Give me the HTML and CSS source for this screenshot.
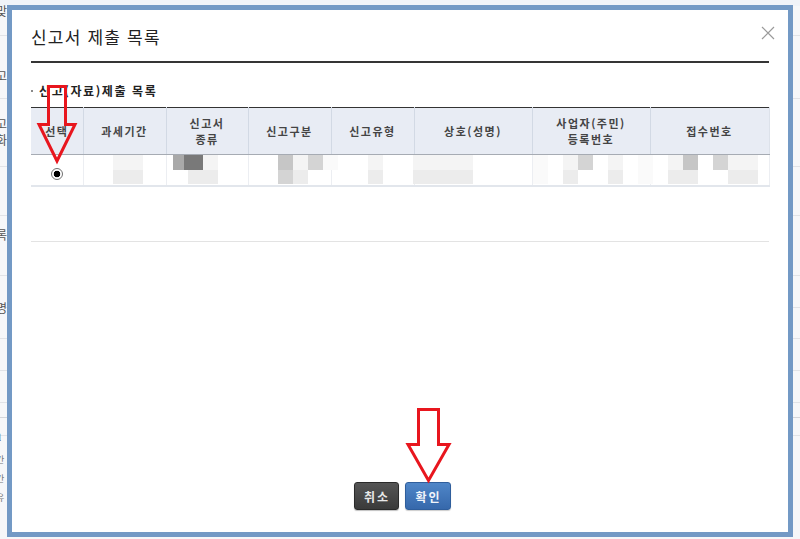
FILE: index.html
```html
<!DOCTYPE html>
<html lang="ko">
<head>
<meta charset="utf-8">
<title>신고서 제출 목록</title>
<link rel="stylesheet" href="styles.css">
</head>
<body>
<div class="gutter">
  <div class="g g-a">맞</div>
  <div class="g g-b">고</div>
  <div class="g g-c">고<br>화</div>
  <div class="g g-d">록</div>
  <div class="g g-e">명</div>
  <div class="g g-f">ll</div>
  <div class="g g-g">간<br>간<br>유</div>
</div>
<div class="modal">
  <div class="modal-head">
    <h1 class="modal-title">신고서 제출 목록</h1>
    <button class="close" type="button" aria-label="닫기">
      <svg width="14" height="14" viewBox="0 0 14 14"><path d="M1 1 L13 13 M13 1 L1 13" stroke="#9a9a9a" stroke-width="1.2" fill="none"/></svg>
    </button>
  </div>
  <div class="rule"></div>
  <h2 class="sec-title"><span class="bullet"></span>신고(자료)제출 목록</h2>
  <div class="list-box">
    <table class="grid">
      <colgroup>
        <col class="w52"><col class="w83"><col class="w82"><col class="w83"><col class="w83"><col class="w118"><col class="w118"><col class="w119">
      </colgroup>
      <thead>
        <tr>
          <th>선택</th>
          <th>과세기간</th>
          <th>신고서<br>종류</th>
          <th>신고구분</th>
          <th>신고유형</th>
          <th>상호(성명)</th>
          <th>사업자(주민)<br>등록번호</th>
          <th>접수번호</th>
        </tr>
      </thead>
      <tbody>
        <tr>
          <td><span class="radio"></span></td>
          <td></td><td></td><td></td><td></td><td></td><td></td><td></td>
        </tr>
      </tbody>
    </table>
    <div class="mosaic" aria-hidden="true">
      <i class="b"></i><i class="b"></i><i></i><i></i><i class="f"></i><i class="g"></i><i class="b"></i><i></i><i></i><i></i><i></i><i class="e"></i><i class="b"></i><i class="d"></i><i class="a"></i><i></i><i></i><i class="b"></i><i></i><i></i><i class="b"></i><i class="b"></i><i class="b"></i><i class="b"></i><i></i><i></i><i></i><i></i><i class="a"></i><i></i><i class="b"></i><i class="d"></i><i></i><i class="b"></i><i></i><i class="a"></i><i></i><i class="b"></i><i class="e"></i><i></i><i class="d"></i><i class="b"></i><i class="b"></i><i></i>
      <i class="c"></i><i class="c"></i><i></i><i></i><i></i><i class="c"></i><i class="c"></i><i></i><i></i><i></i><i></i><i class="d"></i><i class="c"></i><i></i><i></i><i></i><i></i><i class="c"></i><i></i><i></i><i class="c"></i><i class="c"></i><i class="c"></i><i class="c"></i><i></i><i></i><i></i><i></i><i class="a"></i><i></i><i class="c"></i><i></i><i></i><i class="c"></i><i></i><i class="a"></i><i></i><i class="c"></i><i class="c"></i><i></i><i></i><i class="c"></i><i class="c"></i><i></i>
    </div>
  </div>
  <div class="actions">
    <button class="btn btn-dark" type="button">취소</button>
    <button class="btn btn-blue" type="button">확인</button>
  </div>
</div>
<svg class="annot" width="800" height="539" viewBox="0 0 800 539" aria-hidden="true">
  <polygon points="48.5,86.5 65.5,86.5 65.5,124.5 75,124.5 57,161 39,124.5 48.5,124.5" fill="none" stroke="#e8161e" stroke-width="3" stroke-linejoin="miter"/>
  <polygon points="418.5,409.5 438.5,409.5 438.5,444.5 449,444.5 428.5,480.5 408,444.5 418.5,444.5" fill="none" stroke="#e8161e" stroke-width="3" stroke-linejoin="miter"/>
</svg>
</body>
</html>
```
FILE: styles.css
```css
html, body {
  margin: 0;
  padding: 0;
}
body {
  width: 800px;
  height: 539px;
  overflow: hidden;
  display: flex;
  align-items: flex-start;
  position: relative;
  font-family: "Noto Sans CJK KR", "Noto Sans", sans-serif;
  color: #333;
  background-color: #f6f7f9;
  background-image:
    linear-gradient(#f0f3f8, #f0f3f8),
    linear-gradient(#e1e3e7, #e1e3e7),
    linear-gradient(#e1e3e7, #e1e3e7),
    linear-gradient(#e1e3e7, #e1e3e7),
    linear-gradient(#e1e3e7, #e1e3e7),
    linear-gradient(#e1e3e7, #e1e3e7),
    linear-gradient(#e1e3e7, #e1e3e7),
    linear-gradient(#e1e3e7, #e1e3e7),
    linear-gradient(#e1e3e7, #e1e3e7),
    linear-gradient(#e1e3e7, #e1e3e7),
    linear-gradient(#d4d6da, #d4d6da),
    linear-gradient(#e1e3e7, #e1e3e7);
  background-size: 100% 6px, 100% 1px, 100% 1px, 100% 1px, 100% 1px, 100% 1px, 100% 1px, 100% 1px, 100% 1px, 100% 1px, 100% 1px, 100% 1px;
  background-position: 0 0, 0 35px, 0 98px, 0 166px, 0 215px, 0 275px, 0 307px, 0 338px, 0 370px, 0 402px, 0 417px, 0 435px;
  background-repeat: no-repeat;
}

/* underlying page peeking out on the left */
.gutter {
  width: 7px;
  flex: none;
  height: 539px;
  overflow: hidden;
  font-size: 12px;
  line-height: 16px;
  color: #555;
}
.g {
  margin-left: -4px;
  width: 20px;
}
.g-a { margin-top: 3px; height: 16px; }
.g-b { margin-top: 49px; height: 16px; }
.g-c { margin-top: 32px; height: 32px; }
.g-d { margin-top: 79px; height: 16px; }
.g-e { margin-top: 57px; height: 16px; }
.g-f { margin-top: 114px; height: 16px; font-size: 9px; }
.g-g { margin-top: 4px; height: 60px; line-height: 19px; font-size: 9px; color: #777; }

/* modal window */
.modal {
  flex: none;
  box-sizing: border-box;
  width: 786px;
  height: 532px;
  margin-top: 5px;
  border: 5px solid #7399c5;
  background: #fff;
  padding: 15px 19px 22px 19px;
  display: flex;
  flex-direction: column;
}
.modal-head {
  display: flex;
  justify-content: space-between;
  align-items: flex-start;
  height: 24px;
}
.modal-title {
  margin: 0;
  font-size: 17px;
  line-height: 24px;
  font-weight: 400;
  color: #222;
  letter-spacing: 1.2px;
}
.close {
  margin: 1px -6px 0 0;
  padding: 0;
  width: 14px;
  height: 14px;
  border: 0;
  background: transparent;
  display: flex;
}
.rule {
  margin-top: 12px;
  height: 2px;
  background: #353535;
}
.sec-title {
  margin: 20px 0 8px 0;
  font-size: 12px;
  line-height: 16px;
  font-weight: 700;
  color: #222;
  letter-spacing: 1.6px;
  display: flex;
  align-items: center;
}
.bullet {
  width: 2px;
  height: 2px;
  background: #8a8a8a;
  margin-right: 6px;
}

/* list */
.list-box {
  position: relative;
  height: 134px;
  border-bottom: 1px solid #e3e3e3;
}
.grid {
  width: 738px;
  table-layout: fixed;
  border-collapse: collapse;
  border-top: 1px solid #333;
}
.w52 { width: 52px; }
.w82 { width: 82px; }
.w83 { width: 83px; }
.w118 { width: 118px; }
.w119 { width: 119px; }
.grid th {
  height: 46px;
  padding: 0;
  background: #e8ecf4;
  border-left: 1px solid #d2d9e4;
  border-bottom: 1px solid #a6abb3;
  font-size: 11px;
  line-height: 16px;
  font-weight: 700;
  color: #444;
  letter-spacing: 1.5px;
  text-align: center;
  vertical-align: middle;
}
.grid th:first-child { border-left: 0; }
.grid th:last-child { border-right: 1px solid #dde2ea; }
.grid td {
  height: 30px;
  padding: 0;
  border-left: 1px solid #eceef2;
  border-bottom: 2px solid #e2e6ec;
  text-align: center;
  vertical-align: middle;
}
.grid td:first-child { border-left: 0; }
.grid td:last-child { border-right: 1px solid #eceef2; }
.radio {
  display: inline-block;
  box-sizing: border-box;
  width: 12px;
  height: 12px;
  margin-top: 2px;
  border: 1px solid #707070;
  border-radius: 50%;
  background: radial-gradient(circle, #000 0 3px, #fff 3.6px);
  vertical-align: middle;
}

/* redaction mosaic laid over the data row */
.mosaic {
  position: absolute;
  left: 82px;
  top: 48px;
  display: grid;
  grid-template-columns: repeat(44, 15px);
  grid-template-rows: 15px 14px;
}
.mosaic i { display: block; }
.mosaic .a { background: #fafafa; }
.mosaic .b { background: #f4f4f4; }
.mosaic .c { background: #ececec; }
.mosaic .d { background: #d4d4d4; }
.mosaic .e { background: #c6c6c6; }
.mosaic .f { background: #a9a9a9; }
.mosaic .g { background: #797979; }

/* buttons */
.actions {
  margin-top: auto;
  display: flex;
  justify-content: center;
  gap: 6px;
  padding-left: 4px;
}
.btn {
  height: 28px;
  padding: 0;
  border-radius: 3px;
  font-family: "Noto Sans CJK KR", "Noto Sans", sans-serif;
  font-size: 12px;
  font-weight: 700;
  letter-spacing: 2px;
  text-indent: 2px;
  cursor: pointer;
}
.btn-dark {
  width: 45px;
  color: #e8e8e8;
  border: 1px solid #2a2a2a;
  background: linear-gradient(#555, #3a3a3a);
  box-shadow: 0 1px 1px rgba(0,0,0,0.25);
}
.btn-blue {
  width: 46px;
  color: #f0f4fa;
  border: 1px solid #2f5e9c;
  background: linear-gradient(#4f86c8, #3668ab);
  box-shadow: 0 1px 1px rgba(0,0,0,0.2);
}

/* red annotation arrows drawn over the screenshot */
.annot {
  position: absolute;
  left: 0;
  top: 0;
  pointer-events: none;
}
```
